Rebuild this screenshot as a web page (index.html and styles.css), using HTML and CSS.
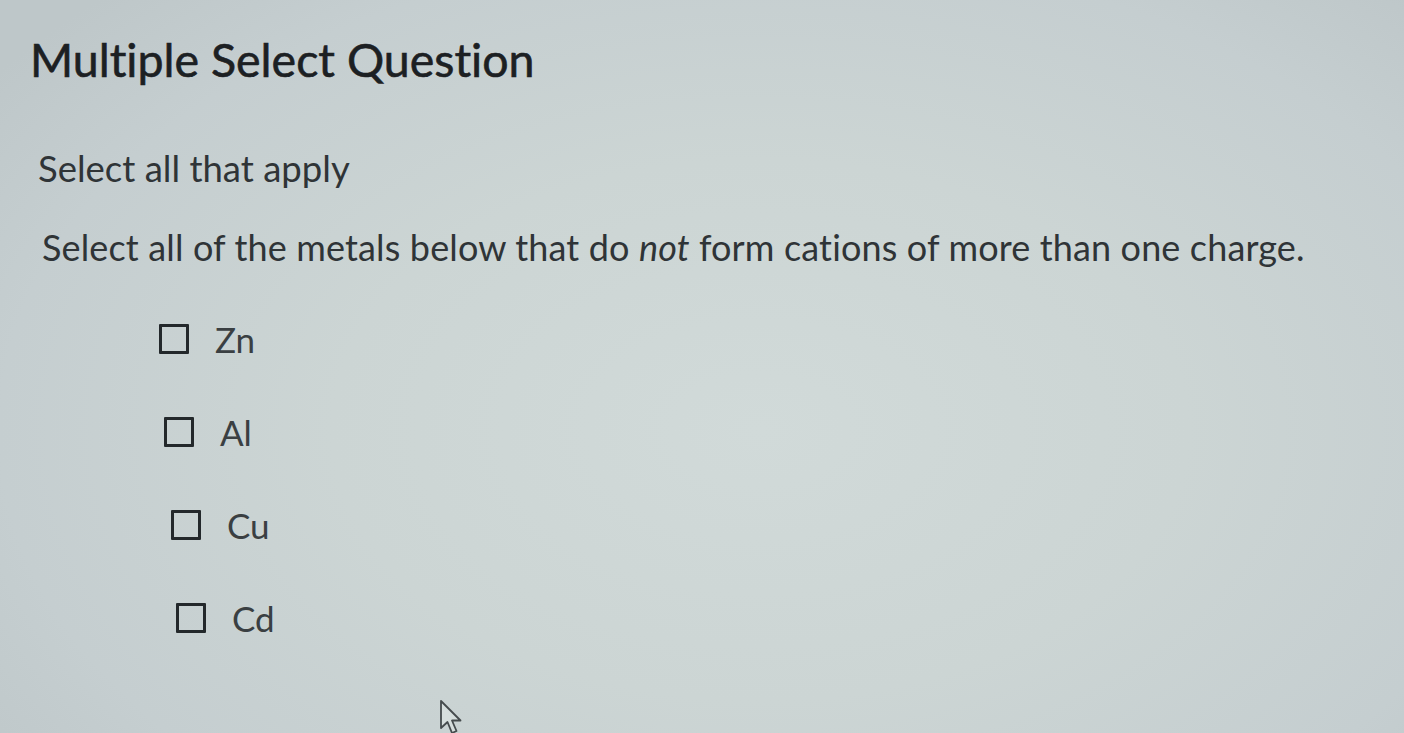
FILE: index.html
```html
<!DOCTYPE html>
<html>
<head>
<meta charset="utf-8">
<link rel="stylesheet" href="styles.css">
</head>
<body>
<div class="page">
  <h1 class="title">Multiple Select Question</h1>
  <p class="hint">Select all that apply</p>
  <p class="prompt">Select all of the metals below that do <em>not</em> form cations of more than one charge.</p>
  <ul class="options">
    <li class="option o1"><span class="box"></span><span class="label">Zn</span></li>
    <li class="option o2"><span class="box"></span><span class="label">Al</span></li>
    <li class="option o3"><span class="box"></span><span class="label">Cu</span></li>
    <li class="option o4"><span class="box"></span><span class="label">Cd</span></li>
  </ul>
  <svg class="cursor" width="26" height="40" viewBox="0 0 26 40">
    <path d="M2 2 L2 29 L8.5 23 L13 34 L17.5 32 L13 21.5 L21.5 21.5 Z" fill="#d6dedd" stroke="#454b4d" stroke-width="1.8" stroke-linejoin="round"/>
  </svg>
</div>
</body>
</html>
```
FILE: styles.css
```css
html, body {
  margin: 0;
  padding: 0;
}
body {
  width: 1404px;
  height: 733px;
  overflow: hidden;
  background:
    radial-gradient(ellipse 950px 600px at 760px 430px, #d1dad9 0%, #ccd5d4 45%, #c5ced0 80%, #bec7c9 100%);
  font-family: "Lato", "Open Sans", sans-serif;
  font-variant-ligatures: none;
  color: #2b3033;
}
.page {
  position: relative;
  height: 733px;
  padding: 32px 0 0 30px;
  box-sizing: border-box;
}
.title {
  margin: 0;
  font-size: 46.5px;
  font-weight: 400;
  -webkit-text-stroke: 0.6px #1c2023;
  color: #1c2023;
  line-height: 1.2;
}
.hint {
  margin: 59px 0 0 8px;
  font-size: 36.5px;
  line-height: 1.2;
  color: #2f3437;
}
.prompt {
  margin: 35px 0 0 12px;
  font-size: 36px;
  line-height: 1.2;
  letter-spacing: 0.14px;
  color: #2f3437;
}
.prompt em {
  font-style: italic;
}
.options {
  list-style: none;
  margin: 50px 0 0 0;
  padding: 0;
}
.option {
  display: flex;
  align-items: center;
  height: 40px;
  margin-bottom: 53px;
  font-size: 35px;
  line-height: 40px;
  color: #3a3f42;
}
.o1 { margin-left: 129px; }
.o2 { margin-left: 134px; }
.o3 { margin-left: 141px; }
.o4 { margin-left: 146px; }
.box {
  width: 24px;
  height: 24px;
  border: 3.5px solid #23282b;
  border-radius: 1px;
  margin-right: 26px;
  box-sizing: content-box;
  flex: none;
}
.cursor {
  position: absolute;
  left: 439px;
  top: 699px;
}
```
